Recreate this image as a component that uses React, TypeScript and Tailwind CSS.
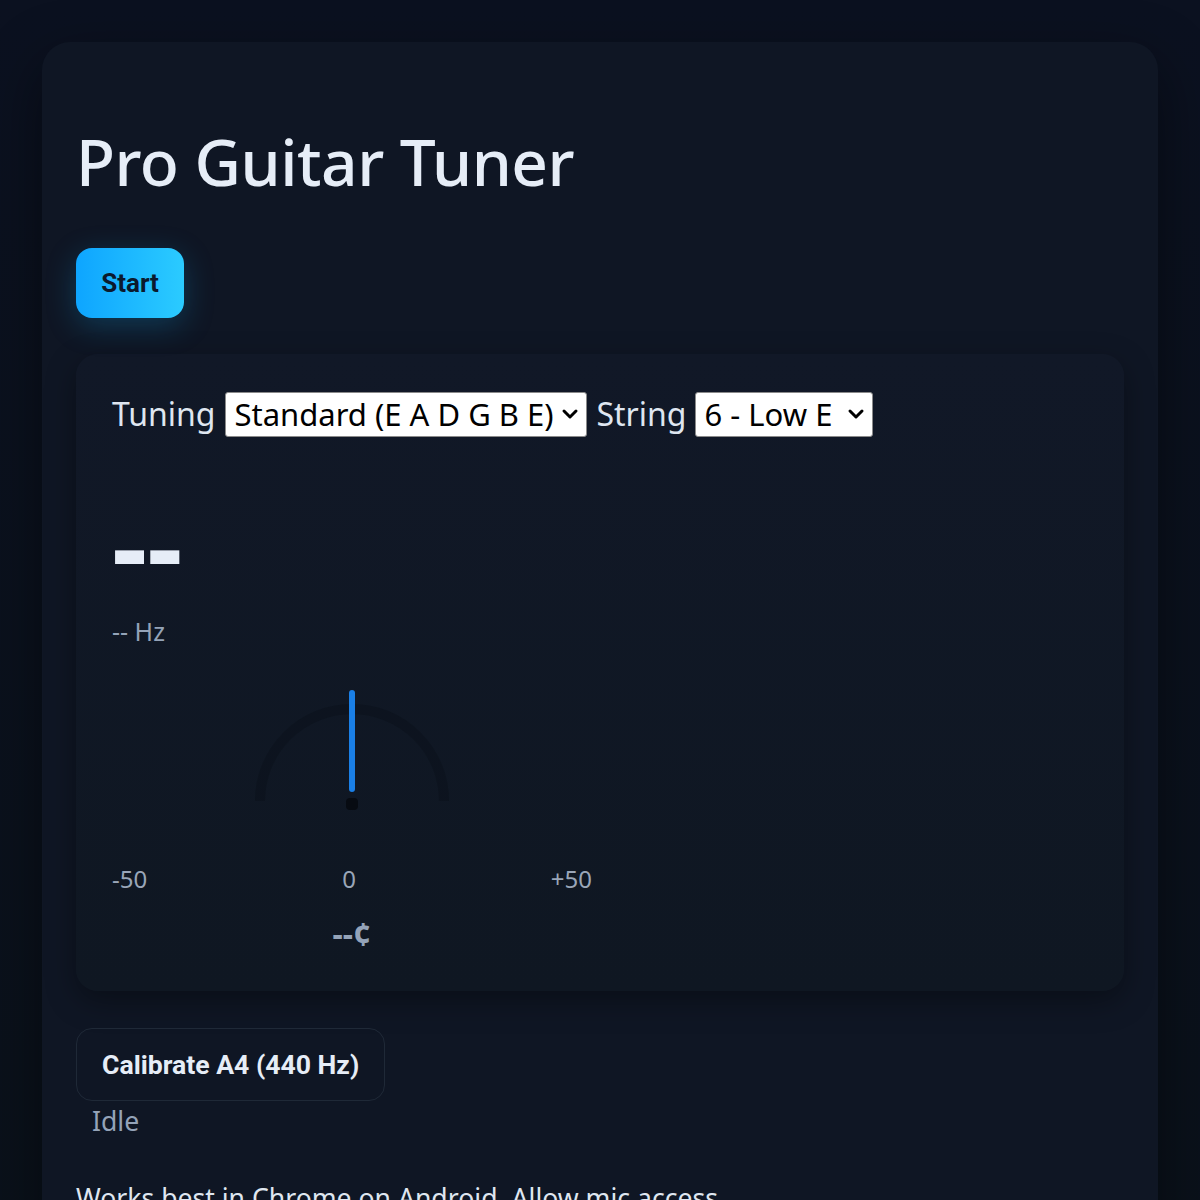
import React from "react";

function Chevron() {
  return (
    <svg
      className="pointer-events-none absolute right-[8px] top-1/2 -translate-y-1/2"
      width="18"
      height="12"
      viewBox="0 0 18 12"
    >
      <path d="M3 3 L9 9 L15 3" fill="none" stroke="#000" strokeWidth="3" strokeLinecap="round" strokeLinejoin="round" />
    </svg>
  );
}

export default function App() {
  return (
    <div
      className="min-h-[1200px] w-full bg-[linear-gradient(180deg,#0b1120_0%,#0a111a_100%)] px-[42px] pt-[42px]"
      style={{ fontFamily: '"Noto Sans", "Open Sans", sans-serif' }}
    >
      <div className="rounded-t-[28px] bg-[#0f1624] px-[34px] pt-[72px] pb-[60px] shadow-[0_20px_60px_rgba(0,0,0,0.45)]">
        <h1 className="text-[64px] leading-[96px] font-medium text-[#e6edf7] tracking-[-0.5px]">
          Pro Guitar Tuner
        </h1>
        <button
          className="mt-[38px] h-[70px] w-[108px] rounded-[16px] bg-[linear-gradient(90deg,#0ea5ff,#2bcbff)] text-[26px] font-bold text-[#0b1a2e] shadow-[0_8px_30px_rgba(14,165,233,0.25)]"
          style={{ fontFamily: 'Roboto, "Liberation Sans", sans-serif' }}
        >
          Start
        </button>

        <div className="mt-[36px] h-[637px] rounded-[22px] bg-[linear-gradient(180deg,#111827_0%,#0f1722_100%)] px-[36px] pt-[36px] shadow-[0_10px_30px_rgba(0,0,0,0.35)]">
          <div className="flex items-center gap-[10px] text-[32px] text-[#dfe6f0]">
            <span>Tuning</span>
            <div className="relative">
              <select className="h-[45px] w-[362px] appearance-none rounded-[3px] border border-[#8a8a8a] bg-white pl-[8px] pr-[30px] text-[31px] leading-[40px] text-black">
                <option>Standard (E A D G B E)</option>
              </select>
              <Chevron />
            </div>
            <span className="-ml-[1px]">String</span>
            <div className="relative -ml-[2px]">
              <select className="h-[45px] w-[178px] appearance-none rounded-[3px] border border-[#8a8a8a] bg-white pl-[9px] pr-[30px] text-[31px] leading-[40px] text-black">
                <option>6 - Low E</option>
              </select>
              <Chevron />
            </div>
          </div>

          <div className="mt-[51px] h-[110px] text-[110px] leading-[110px] font-bold text-[#e6edf7]">
            --
          </div>

          <div className="mt-[17px] text-[25px] leading-[30px] text-[#94a3b8]">-- Hz</div>

          <div className="w-[480px]">
            <div className="mt-[35px] flex justify-center">
              <svg width="240" height="130" viewBox="0 0 240 130">
                <path
                  d="M28 120 A92 92 0 0 1 212 120"
                  fill="none"
                  stroke="#05080e"
                  strokeWidth="10"
                  opacity="0.22"
                />
                <line x1="120" y1="12" x2="120" y2="108" stroke="#1a7fe6" strokeWidth="6" strokeLinecap="round" />
                <rect x="114" y="117" width="12" height="12" rx="4" fill="#070b12" />
              </svg>
            </div>
            <div className="mt-[53px] flex justify-between text-[24px] leading-[30px] text-[#9aa6b8]">
              <span>-50</span>
              <span>0</span>
              <span>+50</span>
            </div>
            <div className="mt-[25px] text-center text-[32px] leading-[30px] font-bold text-[#94a3b8]">
              --¢
            </div>
          </div>
        </div>

        <button
          className="mt-[37px] h-[73px] rounded-[16px] border border-[#1f2937] bg-transparent px-[25px] text-[26.6px] font-bold text-[#e6edf7]"
          style={{ fontFamily: 'Roboto, "Liberation Sans", sans-serif' }}
        >
          Calibrate A4 (440 Hz)
        </button>
        <div className="ml-[16px] mt-[2px] text-[26.6px] leading-[36px] text-[#94a3b8]">Idle</div>
        <p className="mt-[41px] text-[26.6px] leading-[36px] text-[#dfe6f0]">
          Works best in Chrome on Android. Allow mic access.
        </p>
      </div>
    </div>
  );
}
